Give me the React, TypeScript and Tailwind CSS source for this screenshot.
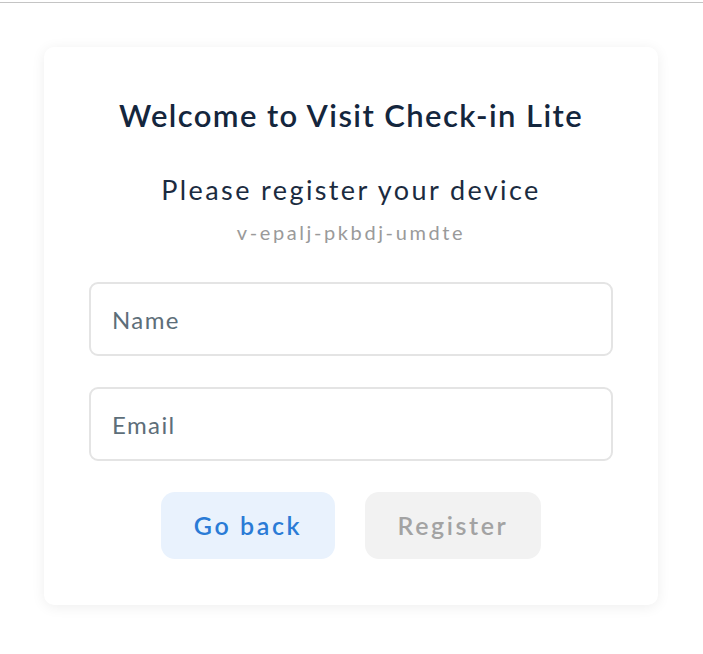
import { useState } from 'react';

export default function App() {
  const [name, setName] = useState('');
  const [email, setEmail] = useState('');
  const canRegister = name.trim() !== '' && email.trim() !== '';

  return (
    <div className="min-h-[654px] w-full bg-white border-t border-[#c4c4c4] mt-[2px] font-['Lato','Noto_Sans',sans-serif]">
      <div className="pt-[44px] px-[44px]">
        {/* 卡片 */}
        <div className="w-[614px] rounded-[10px] bg-white shadow-[0_2px_14px_rgba(0,0,0,0.07)] px-[45px] pt-[48px] pb-[46px] flex flex-col items-center">
          <h1 className="text-[31px] leading-[40px] font-semibold text-[#14263d] text-center tracking-[1.4px]">
            Welcome to Visit Check-in Lite
          </h1>
          <h2 className="mt-[37px] text-[27px] leading-[36px] text-[#1b2b40] text-center tracking-[2.4px]">
            Please register your device
          </h2>
          <p className="mt-[10px] text-[20px] leading-[28px] text-[#9a9a9a] tracking-[2.6px]">
            v-epalj-pkbdj-umdte
          </p>

          <input
            value={name}
            onChange={(e) => setName(e.target.value)}
            placeholder="Name"
            className="mt-[36px] w-full h-[74px] rounded-[9px] border-2 border-[#e4e4e4] px-[21px] text-[24px] tracking-[1.4px] text-[#1b2b40] placeholder:text-[#5d6e79] outline-none"
          />
          <input
            value={email}
            onChange={(e) => setEmail(e.target.value)}
            placeholder="Email"
            className="mt-[31px] w-full h-[74px] rounded-[9px] border-2 border-[#e4e4e4] px-[21px] text-[24px] tracking-[1.4px] text-[#1b2b40] placeholder:text-[#5d6e79] outline-none"
          />

          <div className="mt-[31px] flex gap-[30px]">
            <button className="w-[174px] h-[67px] rounded-[14px] bg-[#e9f2fd] text-[#2a7bd6] text-[25px] font-semibold tracking-[2.6px]">
              Go back
            </button>
            <button
              disabled={!canRegister}
              className="w-[176px] h-[67px] rounded-[14px] bg-[#f2f2f2] text-[#a3a3a3] text-[25px] font-semibold tracking-[2.6px]"
            >
              Register
            </button>
          </div>
        </div>
      </div>
    </div>
  );
}
